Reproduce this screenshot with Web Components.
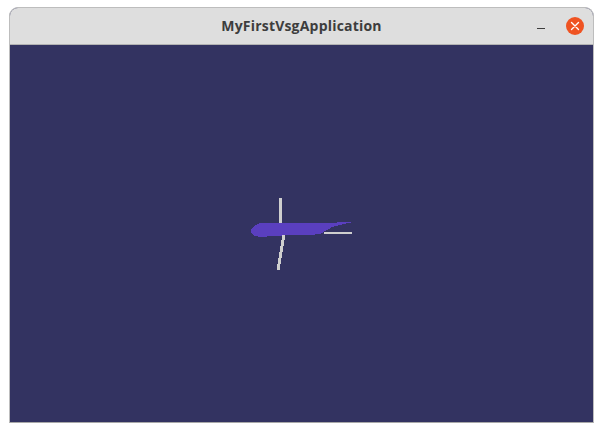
<!DOCTYPE html>
<html><head><meta charset="utf-8"><title>MyFirstVsgApplication</title>
<style>html,body{margin:0;background:#fff;height:100%}body{padding:7px 9px 9px 9px;box-sizing:border-box;width:603px;height:432px;overflow:hidden}</style>
</head><body>
<app-window title-text="MyFirstVsgApplication"><vsg-scene></vsg-scene></app-window>
<script>
class AppWindow extends HTMLElement{constructor(){super();const s=this.attachShadow({mode:'open'});
s.innerHTML=`<style>
:host{display:flex;flex-direction:column;width:585px;height:416px;box-sizing:border-box;border:1px solid #bdbdbd;border-bottom-color:#a8a8a8;border-radius:9px 9px 0 0;overflow:hidden;background:#333361}
header{flex:0 0 36px;display:grid;grid-template-columns:1fr auto 1fr;align-items:center;background:#dedede;border-bottom:1px solid #b3b3b3;font:700 14px "Open Sans","Noto Sans",sans-serif;color:#3d3d3d}
.t{grid-column:2;white-space:nowrap;letter-spacing:.2px;margin-top:-1px}
.c{grid-column:3;justify-self:end;display:flex;align-items:center;gap:21px;padding-right:9px}
.min{width:8px;height:1px;background:#3d3d3d;margin-top:4px}
.x{width:18px;height:18px;border-radius:50%;background:#ef5322;display:flex;align-items:center;justify-content:center}
main{flex:1;min-height:0;display:block}
</style><header><span class="t"></span><div class="c"><div class="min"></div><div class="x"><svg width="10" height="10" viewBox="0 0 10 10"><path d="M1.5 1.5L8.5 8.5M8.5 1.5L1.5 8.5" stroke="#fff" stroke-width="1.4" stroke-linecap="round"/></svg></div></div></header><main><slot></slot></main>`;
s.querySelector('.t').textContent=this.getAttribute('title-text');}}
customElements.define('app-window',AppWindow);
class VsgScene extends HTMLElement{constructor(){super();const s=this.attachShadow({mode:'open'});
s.innerHTML=`<style>:host{display:block;width:100%;height:100%;background:#333361}svg{display:block}</style>
<svg width="583" height="378" viewBox="10 45 583 378" shape-rendering="crispEdges">
<path d="M280.5 198V226" stroke="#cfcfcf" stroke-width="3"/>
<path d="M324 233H352" stroke="#cfcfcf" stroke-width="2"/>
<path d="M284 234L278 270" stroke="#cfcfcf" stroke-width="3"/>
<path d="M251 231L252 228L255 225.5L258 224L260 223L322 223L332 222.7L345 222.2L352 221.7L350 222.8L343 224.2L333 226.7L326.7 230L323 232.3L319 234.4L285 235.3L260 237L255 236L252 234Z" fill="#5a3fbf"/>
</svg>`;}}
customElements.define('vsg-scene',VsgScene);
</script></body></html>
